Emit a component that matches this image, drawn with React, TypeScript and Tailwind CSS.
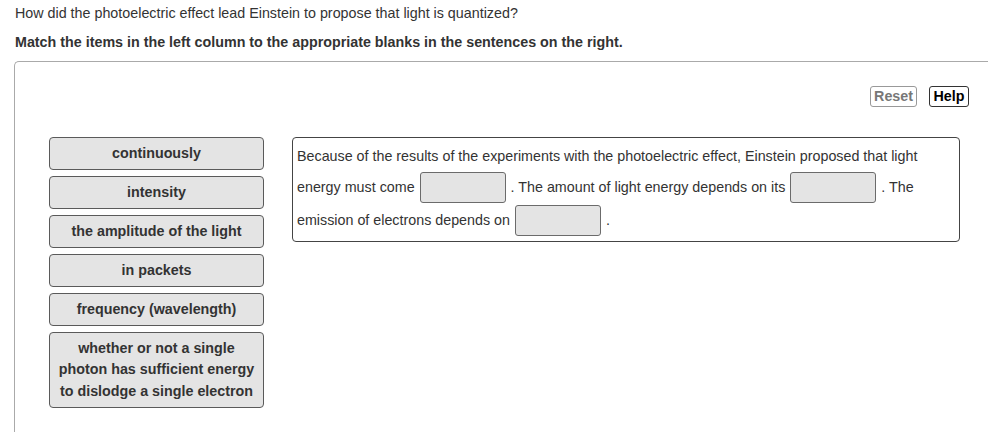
const choices = [
  'continuously',
  'intensity',
  'the amplitude of the light',
  'in packets',
  'frequency (wavelength)',
];

function Blank() {
  return (
    <span className="mx-[5px] inline-block h-[31px] w-[86px] shrink-0 rounded-[3px] border border-[#6b6b6b] bg-[#e4e4e4]" />
  );
}

export default function App() {
  return (
    <div className="h-[432px] w-[988px] overflow-hidden bg-white font-['Liberation_Sans',Arial,sans-serif] text-[14.3px] text-[#333]">
      <div className="pl-[15px] pt-[5px]">
        <p className="leading-[16px]">
          How did the photoelectric effect lead Einstein to propose that light is quantized?
        </p>
        <p className="mt-[13px] font-bold leading-[16px]">
          Match the items in the left column to the appropriate blanks in the sentences on the right.
        </p>
      </div>

      <div className="ml-[14px] mt-[11px] h-[400px] rounded-tl-[5px] border-l border-t border-[#aaa]">
        <div className="flex justify-end gap-[12px] pr-[19px] pt-[24px]">
          <button
            type="button"
            className="h-[21px] rounded-[3px] border border-[#999] px-[3px] text-[14.3px] font-bold leading-[19px] text-[#777]"
          >
            Reset
          </button>
          <button
            type="button"
            className="h-[21px] rounded-[3px] border border-[#333] px-[3.5px] text-[14.3px] font-bold leading-[19px] text-black"
          >
            Help
          </button>
        </div>

        <div className="mt-[30px] flex items-start pl-[34px]">
          <div className="flex w-[215px] flex-col gap-[6px]">
            {choices.map((c) => (
              <div
                key={c}
                className="flex h-[33px] items-center justify-center rounded-[4px] border border-[#5a5a5a] bg-[#e4e4e4] font-bold"
              >
                {c}
              </div>
            ))}
            <div className="flex h-[76px] items-center justify-center rounded-[4px] border border-[#5a5a5a] bg-[#e4e4e4] text-center font-bold leading-[21.5px]">
              whether or not a single
              <br />
              photon has sufficient energy
              <br />
              to dislodge a single electron
            </div>
          </div>

          <div className="ml-[28px] w-[668px] rounded-[4px] border-[1.5px] border-[#444] pb-[5px] pl-[4px] pt-[6px]">
            <div className="flex h-[26px] items-center">
              Because of the results of the experiments with the photoelectric effect, Einstein
              proposed that light
            </div>
            <div className="mt-[2px] flex h-[31px] items-center whitespace-nowrap">
              energy must come
              <Blank />. The amount of light energy depends on its
              <Blank />. The
            </div>
            <div className="mt-[2px] flex h-[31px] items-center whitespace-nowrap">
              emission of electrons depends on
              <Blank />.
            </div>
          </div>
        </div>
      </div>
    </div>
  );
}
